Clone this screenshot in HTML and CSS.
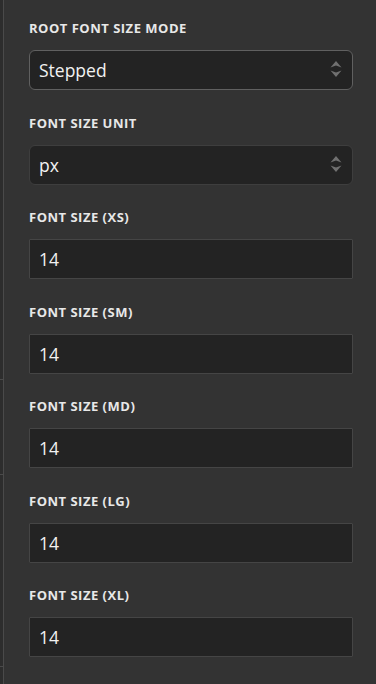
FILE: index.html
```html
<!DOCTYPE html>
<html lang="en">

<head>
    <meta charset="UTF-8">
    <meta name="viewport" content="width=device-width, initial-scale=1.0">
    <title>Typography Settings</title>
    <link rel="stylesheet" href="styles.css">
</head>

<body>
    <div class="edge">
        <span class="tick" style="top: 379px"></span>
        <span class="tick" style="top: 474px"></span>
        <span class="tick" style="top: 666px"></span>
    </div>
    <div class="panel">
        <div class="form-group">
            <label for="root-mode">Root Font Size Mode</label>
            <div class="select-wrap">
                <select id="root-mode" class="field select active">
                    <option>Stepped</option>
                    <option>Fluid</option>
                </select>
                <svg class="caret" width="12" height="18" viewBox="0 0 12 18">
                    <path d="M6 1 L11.5 7.5 L6 5.6 L0.5 7.5 Z" fill="#707070"/>
                    <path d="M6 17 L11.5 10.5 L6 12.4 L0.5 10.5 Z" fill="#707070"/>
                </svg>
            </div>
        </div>
        <div class="form-group">
            <label for="unit">Font Size Unit</label>
            <div class="select-wrap">
                <select id="unit" class="field select">
                    <option>px</option>
                    <option>rem</option>
                </select>
                <svg class="caret" width="12" height="18" viewBox="0 0 12 18">
                    <path d="M6 1 L11.5 7.5 L6 5.6 L0.5 7.5 Z" fill="#707070"/>
                    <path d="M6 17 L11.5 10.5 L6 12.4 L0.5 10.5 Z" fill="#707070"/>
                </svg>
            </div>
        </div>
        <div class="form-group">
            <label for="fs-xs">Font Size (XS)</label>
            <input type="text" id="fs-xs" class="field" value="14">
        </div>
        <div class="form-group">
            <label for="fs-sm">Font Size (SM)</label>
            <input type="text" id="fs-sm" class="field" value="14">
        </div>
        <div class="form-group">
            <label for="fs-md">Font Size (MD)</label>
            <input type="text" id="fs-md" class="field" value="14">
        </div>
        <div class="form-group">
            <label for="fs-lg">Font Size (LG)</label>
            <input type="text" id="fs-lg" class="field" value="14">
        </div>
        <div class="form-group">
            <label for="fs-xl">Font Size (XL)</label>
            <input type="text" id="fs-xl" class="field" value="14">
        </div>
    </div>
</body>

</html>
```

FILE: styles.css
```css
body {
    font-family: 'Open Sans', 'Segoe UI', sans-serif;
    background-color: #333333;
    margin: 0;
    padding: 0;
    display: flex;
    min-height: 100vh;
    overflow: hidden;
}

.edge {
    position: relative;
    width: 3px;
    background-color: #2d2d2d;
    border-right: 1px solid #4a4a4a;
    flex-shrink: 0;
}

.edge .tick {
    position: absolute;
    left: 0;
    width: 3px;
    height: 1px;
    background-color: #4a4a4a;
}

.panel {
    flex: 1;
    padding: 20px 23px 0 25px;
}

.form-group {
    margin-bottom: 24.5px;
}

label {
    display: block;
    height: 16px;
    line-height: 16px;
    margin-bottom: 14px;
    color: #e8e8e8;
    font-size: 13px;
    font-weight: bold;
    text-transform: uppercase;
    letter-spacing: 0.5px;
}

.field {
    display: block;
    width: 100%;
    height: 40px;
    box-sizing: border-box;
    padding: 0 9px;
    background-color: #232323;
    border: 1px solid #454545;
    border-radius: 1px;
    color: #f2f2f2;
    font-family: 'Open Sans', 'Segoe UI', sans-serif;
    font-size: 17.5px;
    outline: none;
}

.select-wrap {
    position: relative;
}

.select {
    -webkit-appearance: none;
    appearance: none;
    border-radius: 6px;
    border-color: #3e3e3e;
    padding-left: 9px;
}

.select.active {
    border-color: #606060;
}

.caret {
    position: absolute;
    right: 11px;
    top: 10px;
    pointer-events: none;
}
```
